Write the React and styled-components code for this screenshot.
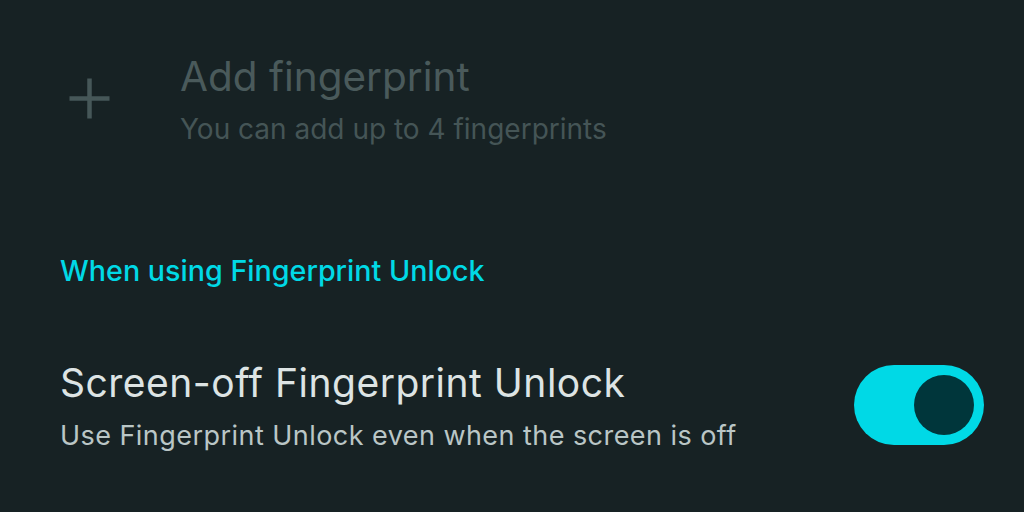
import styled, { createGlobalStyle } from "styled-components";

const GlobalStyle = createGlobalStyle`
  html, body {
    margin: 0;
    padding: 0;
    background: #172224;
  }
  body {
    font-family: Inter, Roboto, sans-serif;
  }
`;

const Page = styled.div`
  width: 1024px;
  height: 512px;
  background: #172224;
  box-sizing: border-box;
  padding: 53px 40px 0 60px;
  display: flex;
  flex-direction: column;
  overflow: hidden;
`;

const AddRow = styled.div`
  display: flex;
  align-items: center;
`;

const IconCell = styled.div`
  width: 120px;
  display: flex;
  align-items: center;
  padding: 0 0 3px 9px;
  box-sizing: border-box;
  color: #465758;
`;

const TextBlock = styled.div`
  display: flex;
  flex-direction: column;
  flex: 1;
`;

const Title = styled.div`
  font-size: ${(p) => p.$size}px;
  line-height: ${(p) => p.$line}px;
  letter-spacing: ${(p) => p.$track || 0}px;
  color: ${(p) => p.$color};
  white-space: nowrap;
`;

const Summary = styled.div`
  font-size: ${(p) => p.$size}px;
  line-height: ${(p) => p.$line}px;
  letter-spacing: ${(p) => p.$track || 0}px;
  color: ${(p) => p.$color};
  margin-top: ${(p) => p.$gap}px;
  white-space: nowrap;
`;

const Category = styled.div`
  margin-top: 106px;
  font-size: 28.7px;
  line-height: 36px;
  font-weight: 500;
  color: #00d9e6;
`;

const SwitchRow = styled.div`
  margin-top: 71px;
  display: flex;
  align-items: flex-start;
  justify-content: space-between;
`;

const Track = styled.div`
  margin-top: 5px;
  width: 130px;
  height: 80px;
  border-radius: 40px;
  background: #00d9e6;
  display: flex;
  align-items: center;
  justify-content: flex-end;
  padding-right: 10px;
  box-sizing: border-box;
  flex-shrink: 0;
`;

const Thumb = styled.div`
  width: 60px;
  height: 60px;
  border-radius: 50%;
  background: #00363b;
`;

export default function App() {
  return (
    <>
      <GlobalStyle />
      <Page>
        <AddRow>
          <IconCell>
            <svg width="41" height="41" viewBox="0 0 41 41">
              <path d="M20.5 0.5v40M0.5 20.5h40" stroke="currentColor" strokeWidth="4.5" fill="none" />
            </svg>
          </IconCell>
          <TextBlock>
            <Title $size={40.5} $line={48} $color="#4a5a5b">Add fingerprint</Title>
            <Summary $size={28} $line={36} $color="#455556" $gap={10}>
              You can add up to 4 fingerprints
            </Summary>
          </TextBlock>
        </AddRow>
        <Category>When using Fingerprint Unlock</Category>
        <SwitchRow>
          <TextBlock>
            <Title $size={39} $line={46} $track={0.5} $color="#dde4e4">
              Screen-off Fingerprint Unlock
            </Title>
            <Summary $size={27} $line={34} $track={0.45} $color="#bac6c6" $gap={13}>
              Use Fingerprint Unlock even when the screen is off
            </Summary>
          </TextBlock>
          <Track>
            <Thumb />
          </Track>
        </SwitchRow>
      </Page>
    </>
  );
}
